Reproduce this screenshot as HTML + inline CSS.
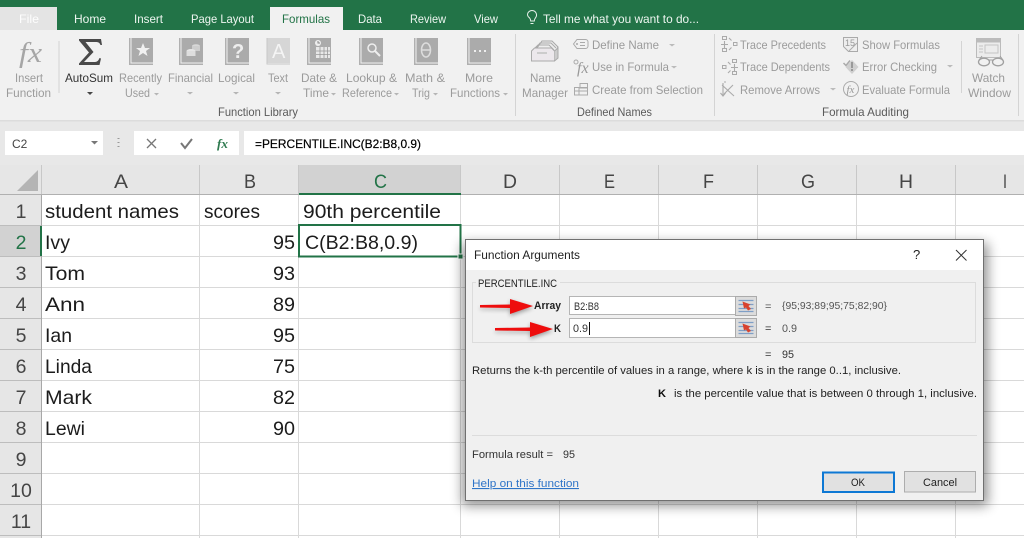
<!DOCTYPE html>
<html><head><meta charset="utf-8"><title>Excel</title>
<style>
html,body{margin:0;padding:0;background:#fff;overflow:hidden}
svg{display:block;font-family:"Liberation Sans",sans-serif}
.r{font-size:11.6px;fill:#9b9b9b}
.d{font-size:11.6px;fill:#333}
.g{font-size:11.6px;fill:#5a5a5a}
.t{font-size:11.8px;fill:#eef6f1}
.c{font-size:19.5px;fill:#1c1c1c}
.h{font-size:19.5px;fill:#444}
.st{fill:none;stroke:#aaa;stroke-width:1}
.l{stroke:#d9d9d9;stroke-width:1}
</style></head><body>
<svg width="1024" height="538" viewBox="0 0 1024 538" xmlns="http://www.w3.org/2000/svg">
<defs>
<filter id="s" filterUnits="userSpaceOnUse" x="420" y="200" width="604" height="338"><feGaussianBlur stdDeviation="6"/></filter>
<filter id="as" x="-20%" y="-80%" width="140%" height="260%"><feGaussianBlur stdDeviation="2"/></filter>
<filter id="b"><feGaussianBlur stdDeviation="0.35"/></filter>
<g id="book"><rect x="0" y="0" width="1.500" height="27" fill="#b0b0b0"/><rect x="2.500" y="0" width="21.500" height="24.500" fill="#ababab"/><rect x="1" y="25.500" width="23" height="1.500" fill="#b0b0b0"/></g>
<g id="pick"><rect x="0" y="0" width="21" height="19" fill="#dcdcdc" stroke="#ababab"/><path d="M3 4h15M3 8h15M3 12h15M3 15h15" stroke="#7f9fc6" stroke-width="1.300"/><path d="M7 5l8 3-2 1.500 2.500 3-3 1.500-2-3-2 1Z" fill="#d8432f"/></g>
</defs>
<g filter="url(#b)">
<!-- top chrome -->
<rect width="1024" height="30" fill="#217346"/>
<rect x="0" y="7" width="57" height="23" fill="#e4e4e4"/>
<rect x="270" y="7" width="73" height="23" fill="#f1f1f1"/>
<rect y="30" width="1024" height="90" fill="#f1f1f1"/>
<rect y="120" width="1024" height="1.500" fill="#dcdcdc"/>
<rect y="121.500" width="1024" height="43.500" fill="#e8e8e8"/>
<text class="t" x="19" y="23" textLength="20" lengthAdjust="spacingAndGlyphs" style="fill:#fdfdfd">File</text>
<text class="t" x="74" y="23" textLength="32" lengthAdjust="spacingAndGlyphs">Home</text>
<text class="t" x="134" y="23" textLength="29" lengthAdjust="spacingAndGlyphs">Insert</text>
<text class="t" x="191" y="23" textLength="63" lengthAdjust="spacingAndGlyphs">Page Layout</text>
<text class="t" x="282" y="23" textLength="48" lengthAdjust="spacingAndGlyphs" style="fill:#217346">Formulas</text>
<text class="t" x="358" y="23" textLength="24" lengthAdjust="spacingAndGlyphs">Data</text>
<text class="t" x="410" y="23" textLength="36" lengthAdjust="spacingAndGlyphs">Review</text>
<text class="t" x="474" y="23" textLength="24" lengthAdjust="spacingAndGlyphs">View</text>
<path d="M527.500 15a4.500 4.500 0 1 1 8 2.800c-1 1.200-1.200 2.200-1.200 3.200h-3.600c0-1-.2-2-1.200-3.200a4.500 4.500 0 0 1-2-2.800ZM530.500 23.500h3" fill="none" stroke="#e8f2ec" stroke-width="1"/>
<text class="t" x="543" y="23" textLength="156" lengthAdjust="spacingAndGlyphs">Tell me what you want to do...</text>

<!-- ribbon separators -->
<path d="M59 41v52M515.500 34v82M714.500 34v82M961.500 41v52M1018.500 34v82" stroke="#d4d4d4" fill="none"/>

<!-- fx -->
<text x="19" y="62" font-family="Liberation Serif" font-style="italic" font-size="29" fill="#a6a6a6" textLength="23" lengthAdjust="spacingAndGlyphs">fx</text>
<text class="r" x="15" y="82" textLength="28" lengthAdjust="spacingAndGlyphs">Insert</text>
<text class="r" x="6" y="97" textLength="45" lengthAdjust="spacingAndGlyphs">Function</text>

<!-- sigma -->
<path d="M79 39h22l1 6h-1.500q-1-3-4-3H85.500l8 10-9.500 10h11q3 0 4.500-4l1.500.5-1.500 6.500H79v-1.500l10-11-10-12Z" fill="#4a4a4a"/>
<text class="d" x="65" y="82" textLength="48" lengthAdjust="spacingAndGlyphs">AutoSum</text>
<path d="M87 92h6l-3 3Z" fill="#444"/>

<!-- function books -->
<use href="#book" x="129" y="38"/><path d="M143 43l2 5h5l-4 3 1.500 5-4.500-3-4.500 3 1.500-5-4-3h5Z" fill="#f1f1f1"/>
<text class="r" x="119" y="82" textLength="43" lengthAdjust="spacingAndGlyphs">Recently</text>
<text class="r" x="125" y="97" textLength="25" lengthAdjust="spacingAndGlyphs">Used</text>
<path d="M154 93h5l-2.500 2.500Z" fill="#b5b5b5"/>

<use href="#book" x="179" y="38"/><ellipse cx="196" cy="46" rx="4" ry="1.800" fill="#d8d8d8"/><rect x="192" y="46" width="8" height="5" fill="#cecece"/><ellipse cx="191" cy="51" rx="4.500" ry="2" fill="#e6e6e6"/><rect x="186.500" y="51" width="9" height="5" fill="#dedede"/>
<text class="r" x="168" y="82" textLength="45" lengthAdjust="spacingAndGlyphs">Financial</text>
<path d="M187 92h6l-3 2.500Z" fill="#b5b5b5"/>

<use href="#book" x="225" y="38"/><text x="232" y="58" font-size="20" font-weight="bold" fill="#eee">?</text>
<text class="r" x="218" y="82" textLength="37" lengthAdjust="spacingAndGlyphs">Logical</text>
<path d="M233 92h6l-3 2.500Z" fill="#b5b5b5"/>

<path d="M267 38h23v25h-23Z" fill="#d6d6d6"/><path d="M267 38v26h23" stroke="#c8c8c8" fill="none"/>
<text x="272" y="58" font-size="20" fill="#f4f4f4">A</text>
<text class="r" x="268" y="82" textLength="20" lengthAdjust="spacingAndGlyphs">Text</text>
<path d="M275 92h6l-3 2.500Z" fill="#b5b5b5"/>

<use href="#book" x="307" y="38"/><circle cx="318" cy="43" r="3" fill="#eee"/><path d="M318 41v2h2" stroke="#888" fill="none"/><rect x="316" y="47" width="14" height="11" fill="#e8e8e8"/><path d="M316 51h14M316 54.500h14M320 47v11M324 47v11M327.500 47v11" stroke="#999" stroke-width=".8"/>
<text class="r" x="301" y="82" textLength="36" lengthAdjust="spacingAndGlyphs">Date &amp;</text>
<text class="r" x="303" y="97" textLength="26" lengthAdjust="spacingAndGlyphs">Time</text>
<path d="M331 93h5l-2.500 2.500Z" fill="#b5b5b5"/>

<use href="#book" x="359" y="38"/><circle cx="372" cy="48" r="4" fill="none" stroke="#eee" stroke-width="1.500"/><path d="M375 51l5 5" stroke="#eee" stroke-width="2"/>
<text class="r" x="346" y="82" textLength="51" lengthAdjust="spacingAndGlyphs">Lookup &amp;</text>
<text class="r" x="342" y="97" textLength="50" lengthAdjust="spacingAndGlyphs">Reference</text>
<path d="M394 93h5l-2.500 2.500Z" fill="#b5b5b5"/>

<use href="#book" x="414" y="38"/><ellipse cx="426" cy="50" rx="4.500" ry="7" fill="none" stroke="#ddd" stroke-width="1.500"/><path d="M421.500 50h9" stroke="#ddd" stroke-width="1.500"/>
<text class="r" x="405" y="82" textLength="40" lengthAdjust="spacingAndGlyphs">Math &amp;</text>
<text class="r" x="412" y="97" textLength="18" lengthAdjust="spacingAndGlyphs">Trig</text>
<path d="M433 93h5l-2.500 2.500Z" fill="#b5b5b5"/>

<use href="#book" x="467" y="38"/><path d="M474 51h2M479 51h2M484 51h2" stroke="#eee" stroke-width="2"/>
<text class="r" x="465" y="82" textLength="28" lengthAdjust="spacingAndGlyphs">More</text>
<text class="r" x="450" y="97" textLength="50" lengthAdjust="spacingAndGlyphs">Functions</text>
<path d="M503 93h5l-2.500 2.500Z" fill="#b5b5b5"/>
<text class="g" x="218" y="116" textLength="80" lengthAdjust="spacingAndGlyphs">Function Library</text>

<!-- defined names -->
<path d="M537 48l5-7h10l6 6-3 5" fill="#eee" stroke="#a8a8a8"/><path d="M535 49l5-6h11l5 5M533 50l5-5h11l5 5" class="st"/>
<path d="M531.500 51l3-3h17l3 3v10h-23Z" fill="#ece8ec" stroke="#aaa"/><rect x="537" y="52" width="10" height="2" fill="#ccc"/><path d="M554.500 51l3.500-3v10l-3.500 3" fill="#ccc" stroke="#aaa"/>
<text class="r" x="530" y="82" textLength="31" lengthAdjust="spacingAndGlyphs">Name</text>
<text class="r" x="522" y="97" textLength="46" lengthAdjust="spacingAndGlyphs">Manager</text>
<path d="M577 39.500h8.500a2.500 2.500 0 0 1 2.500 2.500v4a2.500 2.500 0 0 1-2.500 2.500H577l-3.500-4.500Z" class="st"/><path d="M580 42.500h5M580 45.500h5" class="st"/><circle cx="577" cy="44" r="1" fill="#aaa"/>
<text class="r" x="592" y="49" textLength="67" lengthAdjust="spacingAndGlyphs">Define Name</text>
<path d="M669 44h6l-3 2.500Z" fill="#bbb"/>
<text x="577" y="73" font-family="Liberation Serif" font-style="italic" font-size="16" fill="#999">fx</text><circle cx="576" cy="62" r="2" class="st"/>
<text class="r" x="592" y="71" textLength="77" lengthAdjust="spacingAndGlyphs">Use in Formula</text>
<path d="M671 66h6l-3 2.500Z" fill="#bbb"/>
<rect x="574.500" y="87.500" width="13" height="7.500" fill="#ddd" class="st"/><rect x="580" y="83.500" width="7.500" height="4.500" fill="#e8e8e8" class="st"/><path d="M579 87v8M575 91h13" class="st"/>
<text class="r" x="592" y="94" textLength="111" lengthAdjust="spacingAndGlyphs">Create from Selection</text>
<text class="g" x="577" y="116" textLength="75" lengthAdjust="spacingAndGlyphs">Defined Names</text>

<!-- auditing -->
<path d="M722.500 36.500h4v3h-4ZM722.500 48.500h4v3h-4ZM733.500 42.500h3.500v3h-3.500Z" class="st"/><path d="M721 44.500h7M724.500 41v7M729 38l2.500 2.500M729 50l2.500-2.500" fill="none" stroke="#aaa" stroke-width="1.100"/>
<text class="r" x="740" y="49" textLength="86" lengthAdjust="spacingAndGlyphs">Trace Precedents</text>
<path d="M722.500 65.500h3.500v3h-3.500ZM732.500 59.500h4v3h-4ZM732.500 71.500h4v3h-4Z" class="st"/><path d="M731 67.500h7M734.500 64v7M728 62l2.500 2.500M728 73l2.500-2.500" fill="none" stroke="#aaa" stroke-width="1.100"/>
<text class="r" x="740" y="71" textLength="90" lengthAdjust="spacingAndGlyphs">Trace Dependents</text>
<path d="M723 83v13M720.500 93l2.500 3 2.500-3M722 85l12 11M726 82h-2M733 85l-9 9" fill="none" stroke="#aaa" stroke-width="1.100"/>
<text class="r" x="740" y="94" textLength="80" lengthAdjust="spacingAndGlyphs">Remove Arrows</text>
<path d="M830 88h6l-3 2.500Z" fill="#bbb"/>
<path d="M843.500 37.500h14v14h-9l-5-5Z" fill="#eee" stroke="#aaa"/><text x="845" y="46" font-size="9" fill="#999">15</text><path d="M849 51l8-8" stroke="#aaa"/>
<text class="r" x="862" y="49" textLength="78" lengthAdjust="spacingAndGlyphs">Show Formulas</text>
<path d="M843.500 63l2.500 2.500 4-5" fill="none" stroke="#aaa" stroke-width="1.500"/><path d="M852 60l6.500 7-6.500 7-6.500-7Z" fill="#cfcfcf"/><rect x="851" y="62" width="2" height="6" fill="#999"/><rect x="851" y="69" width="2" height="2" fill="#999"/>
<text class="r" x="862" y="71" textLength="75" lengthAdjust="spacingAndGlyphs">Error Checking</text>
<path d="M947 65h6l-3 2.500Z" fill="#bbb"/>
<circle cx="851" cy="89" r="7.500" class="st"/><text x="846.500" y="93" font-family="Liberation Serif" font-style="italic" font-size="11" fill="#999">fx</text>
<text class="r" x="862" y="94" textLength="88" lengthAdjust="spacingAndGlyphs">Evaluate Formula</text>
<text class="g" x="822" y="116" textLength="87" lengthAdjust="spacingAndGlyphs">Formula Auditing</text>

<!-- watch -->
<rect x="976.500" y="38.500" width="24" height="19" fill="#ececec" stroke="#bbb"/><rect x="976.500" y="38.500" width="24" height="4" fill="#bbb"/><rect x="985" y="45" width="13" height="8" fill="none" stroke="#c4c4c4"/><path d="M979 46h4M979 49h4M979 52h4" stroke="#c4c4c4"/>
<ellipse cx="984" cy="62" rx="5.500" ry="3.800" fill="#f1f1f1" stroke="#a0a0a0" stroke-width="1.300"/><ellipse cx="998" cy="62" rx="5.500" ry="3.800" fill="#f1f1f1" stroke="#a0a0a0" stroke-width="1.300"/><path d="M989 60h4M979 60l3-4M1003 60l-3-4" stroke="#a0a0a0" fill="none"/>
<text class="r" x="972" y="82" textLength="33" lengthAdjust="spacingAndGlyphs">Watch</text>
<text class="r" x="968" y="97" textLength="43" lengthAdjust="spacingAndGlyphs">Window</text>

<!-- formula bar -->
<rect x="5" y="131" width="98" height="24" fill="#fff"/>
<rect x="134" y="131" width="105" height="24" fill="#fff"/>
<rect x="244" y="131" width="780" height="24" fill="#fff"/>
<text x="12" y="148" font-size="12" fill="#444">C2</text>
<path d="M91 141h7l-3.500 3.500Z" fill="#777"/>
<path d="M118.500 138v1M118.500 142v1M118.500 146v1" stroke="#999" stroke-width="2"/>
<path d="M147 139l9 9M156 139l-9 9" stroke="#777" stroke-width="1.300"/>
<path d="M181 143l4 5 7-9" stroke="#777" stroke-width="2" fill="none"/>
<text x="217" y="148" font-family="Liberation Serif" font-style="italic" font-weight="bold" font-size="13" fill="#2f7a4f" textLength="11" lengthAdjust="spacingAndGlyphs">fx</text>
<text x="255" y="148" font-size="12" fill="#000" stroke="#000" stroke-width=".2" textLength="166" lengthAdjust="spacingAndGlyphs">=PERCENTILE.INC(B2:B8,0.9)</text>

<!-- headers -->
<rect y="165" width="1024" height="30" fill="#e6e6e6"/>
<rect x="0" y="195" width="41" height="343" fill="#e6e6e6"/>
<rect x="299" y="165" width="162" height="29" fill="#d2d2d2"/>
<rect x="0" y="226" width="41" height="30" fill="#d2d2d2"/>
<path d="M38 170v21H17Z" fill="#b4b4b4"/>
<!-- grid -->
<path class="l" d="M199.500 195V538M298.500 195V538M460.500 195V538M559.500 195V538M658.500 195V538M757.500 195V538M856.500 195V538M955.500 195V538M41.500 225.500H1024M41.500 256.500H1024M41.500 287.500H1024M41.500 318.500H1024M41.500 349.500H1024M41.500 380.500H1024M41.500 411.500H1024M41.500 442.500H1024M41.500 473.500H1024M41.500 504.500H1024M41.500 535.500H1024"/>
<path d="M41.500 165V194M199.500 165V194M298.500 165V194M460.500 165V194M559.500 165V194M658.500 165V194M757.500 165V194M856.500 165V194M955.500 165V194" stroke="#c8c8c8"/>
<path d="M0 225.500H41M0 256.500H41M0 287.500H41M0 318.500H41M0 349.500H41M0 380.500H41M0 411.500H41M0 442.500H41M0 473.500H41M0 504.500H41M0 535.500H41" stroke="#bdbdbd"/>
<path d="M41.500 195V538" stroke="#a8a8a8"/>
<path d="M0 194.500H299M461 194.500H1024" stroke="#b0b0b0"/>
<rect x="299" y="193" width="162" height="2" fill="#217346"/>
<rect x="40" y="226" width="2" height="30" fill="#217346"/>

<text class="h" x="114" y="188" textLength="14" lengthAdjust="spacingAndGlyphs">A</text>
<text class="h" x="244" y="188" textLength="12" lengthAdjust="spacingAndGlyphs">B</text>
<text class="h" x="374" y="188" textLength="13" lengthAdjust="spacingAndGlyphs" style="fill:#217346">C</text>
<text class="h" x="503" y="188" textLength="14" lengthAdjust="spacingAndGlyphs">D</text>
<text class="h" x="604" y="188" textLength="11" lengthAdjust="spacingAndGlyphs">E</text>
<text class="h" x="703" y="188" textLength="11" lengthAdjust="spacingAndGlyphs">F</text>
<text class="h" x="801" y="188" textLength="14" lengthAdjust="spacingAndGlyphs">G</text>
<text class="h" x="899" y="188" textLength="14" lengthAdjust="spacingAndGlyphs">H</text>
<text class="h" x="1003" y="188" textLength="4" lengthAdjust="spacingAndGlyphs">I</text>

<g text-anchor="middle">
<text class="h" x="21" y="218">1</text>
<text class="h" x="21" y="249" style="fill:#217346">2</text>
<text class="h" x="21" y="280">3</text>
<text class="h" x="21" y="311">4</text>
<text class="h" x="21" y="342">5</text>
<text class="h" x="21" y="373">6</text>
<text class="h" x="21" y="404">7</text>
<text class="h" x="21" y="435">8</text>
<text class="h" x="21" y="466">9</text>
<text class="h" x="21" y="497">10</text>
<text class="h" x="21" y="528">11</text>
</g>

<text class="c" x="45" y="218" textLength="134" lengthAdjust="spacingAndGlyphs">student names</text>
<text class="c" x="204" y="218" textLength="56" lengthAdjust="spacingAndGlyphs">scores</text>
<text class="c" x="303" y="218" textLength="138" lengthAdjust="spacingAndGlyphs">90th percentile</text>
<text class="c" x="45" y="249" textLength="25" lengthAdjust="spacingAndGlyphs">Ivy</text>
<text class="c" x="45" y="280" textLength="40" lengthAdjust="spacingAndGlyphs">Tom</text>
<text class="c" x="45" y="311" textLength="40" lengthAdjust="spacingAndGlyphs">Ann</text>
<text class="c" x="45" y="342" textLength="27" lengthAdjust="spacingAndGlyphs">Ian</text>
<text class="c" x="45" y="373" textLength="47" lengthAdjust="spacingAndGlyphs">Linda</text>
<text class="c" x="45" y="404" textLength="47" lengthAdjust="spacingAndGlyphs">Mark</text>
<text class="c" x="45" y="435" textLength="40" lengthAdjust="spacingAndGlyphs">Lewi</text>
<g>
<text class="c" x="273" y="249" textLength="22" lengthAdjust="spacingAndGlyphs">95</text>
<text class="c" x="273" y="280" textLength="22" lengthAdjust="spacingAndGlyphs">93</text>
<text class="c" x="273" y="311" textLength="22" lengthAdjust="spacingAndGlyphs">89</text>
<text class="c" x="273" y="342" textLength="22" lengthAdjust="spacingAndGlyphs">95</text>
<text class="c" x="273" y="373" textLength="22" lengthAdjust="spacingAndGlyphs">75</text>
<text class="c" x="273" y="404" textLength="22" lengthAdjust="spacingAndGlyphs">82</text>
<text class="c" x="273" y="435" textLength="22" lengthAdjust="spacingAndGlyphs">90</text>
</g>
<!-- selected cell -->
<rect x="299" y="225" width="161.500" height="31.500" fill="#fff" stroke="#217346" stroke-width="2"/>
<rect x="458" y="254" width="5" height="5" fill="#217346" stroke="#fff"/>
<text class="c" x="305" y="249" textLength="113" lengthAdjust="spacingAndGlyphs">C(B2:B8,0.9)</text>

<!-- dialog -->
<rect x="462" y="243" width="526" height="263" fill="#000" opacity=".42" filter="url(#s)"/>
<rect x="465.500" y="239.500" width="518" height="261" fill="#f0f0f0" stroke="#6f6f6f"/>
<rect x="466" y="240" width="517" height="30" fill="#fff"/>
<text x="474" y="259" font-size="11.600" fill="#222" textLength="106" lengthAdjust="spacingAndGlyphs">Function Arguments</text>
<text x="913" y="259" font-size="13" fill="#222">?</text>
<path d="M956 250l10.500 10.500M966.500 250L956 260.500" stroke="#333" stroke-width="1"/>
<rect x="472.500" y="282.500" width="503" height="60" fill="none" stroke="#dcdcdc"/>
<rect x="476" y="278" width="84" height="8" fill="#f0f0f0"/>
<text x="478" y="287" font-size="11" fill="#222" textLength="79" lengthAdjust="spacingAndGlyphs">PERCENTILE.INC</text>

<text x="534" y="309" font-size="11" font-weight="bold" fill="#222" textLength="27" lengthAdjust="spacingAndGlyphs">Array</text>
<text x="554" y="332" font-size="11" font-weight="bold" fill="#222" textLength="7" lengthAdjust="spacingAndGlyphs">K</text>
<rect x="569.500" y="296.500" width="187" height="18" fill="#fff" stroke="#b5b5b5"/>
<rect x="569.500" y="318.500" width="187" height="19" fill="#fff" stroke="#b5b5b5"/>
<text x="574" y="310" font-size="10.800" fill="#333" textLength="25" lengthAdjust="spacingAndGlyphs">B2:B8</text>
<text x="573" y="332" font-size="10.800" fill="#333" textLength="15" lengthAdjust="spacingAndGlyphs">0.9</text>
<path d="M589.500 322v13" stroke="#111"/>
<use href="#pick" x="735.500" y="296.500"/>
<use href="#pick" x="735.500" y="318.500"/>
<text x="765" y="310" font-size="11" fill="#555">=</text>
<text x="782" y="309" font-size="10.300" fill="#555" textLength="105" lengthAdjust="spacingAndGlyphs">{95;93;89;95;75;82;90}</text>
<text x="765" y="332" font-size="11" fill="#333">=</text>
<text x="782" y="332" font-size="11" fill="#555" textLength="15" lengthAdjust="spacingAndGlyphs">0.9</text>
<text x="765" y="358" font-size="11" fill="#333">=</text>
<text x="782" y="358" font-size="11" fill="#333" textLength="12" lengthAdjust="spacingAndGlyphs">95</text>

<text x="472" y="374" font-size="11" fill="#222" textLength="429" lengthAdjust="spacingAndGlyphs">Returns the k-th percentile of values in a range, where k is in the range 0..1, inclusive.</text>
<text x="658" y="397" font-size="11" font-weight="bold" fill="#111" textLength="8" lengthAdjust="spacingAndGlyphs">K</text>
<text x="674" y="397" font-size="11" fill="#222" textLength="303" lengthAdjust="spacingAndGlyphs">is the percentile value that is between 0 through 1, inclusive.</text>
<path d="M472 435.500H977" stroke="#dcdcdc"/>
<text x="472" y="458" font-size="11" fill="#333" textLength="81" lengthAdjust="spacingAndGlyphs">Formula result =</text>
<text x="563" y="458" font-size="11" fill="#333" textLength="12" lengthAdjust="spacingAndGlyphs">95</text>
<text x="472" y="487" font-size="11" fill="#2f74c8" textLength="107" lengthAdjust="spacingAndGlyphs" text-decoration="underline">Help on this function</text>
<rect x="823" y="472.500" width="71" height="19.500" fill="#e1e1e1" stroke="#0f78d4" stroke-width="2"/>
<rect x="904.500" y="471.500" width="71" height="20.500" fill="#e1e1e1" stroke="#adadad"/>
<text x="851" y="486" font-size="11" fill="#222" textLength="14" lengthAdjust="spacingAndGlyphs">OK</text>
<text x="923" y="486" font-size="11" fill="#222" textLength="34" lengthAdjust="spacingAndGlyphs">Cancel</text>

<!-- arrows -->
<path d="M480 308l30-.5V301l23 7-23 8v-6l-30-.5Z" fill="#000" opacity=".35" filter="url(#as)"/>
<path d="M495 331l35-.5V324l23 7-23 8v-6l-35-.5Z" fill="#000" opacity=".35" filter="url(#as)"/>
<path d="M480 305l30-.5V299l23 7-23 8v-6l-30-.5Z" fill="#ee1111"/>
<path d="M495 328l35-.5V322l23 7-23 8v-6l-35-.5Z" fill="#ee1111"/>
</g>
</svg>
</body></html>
